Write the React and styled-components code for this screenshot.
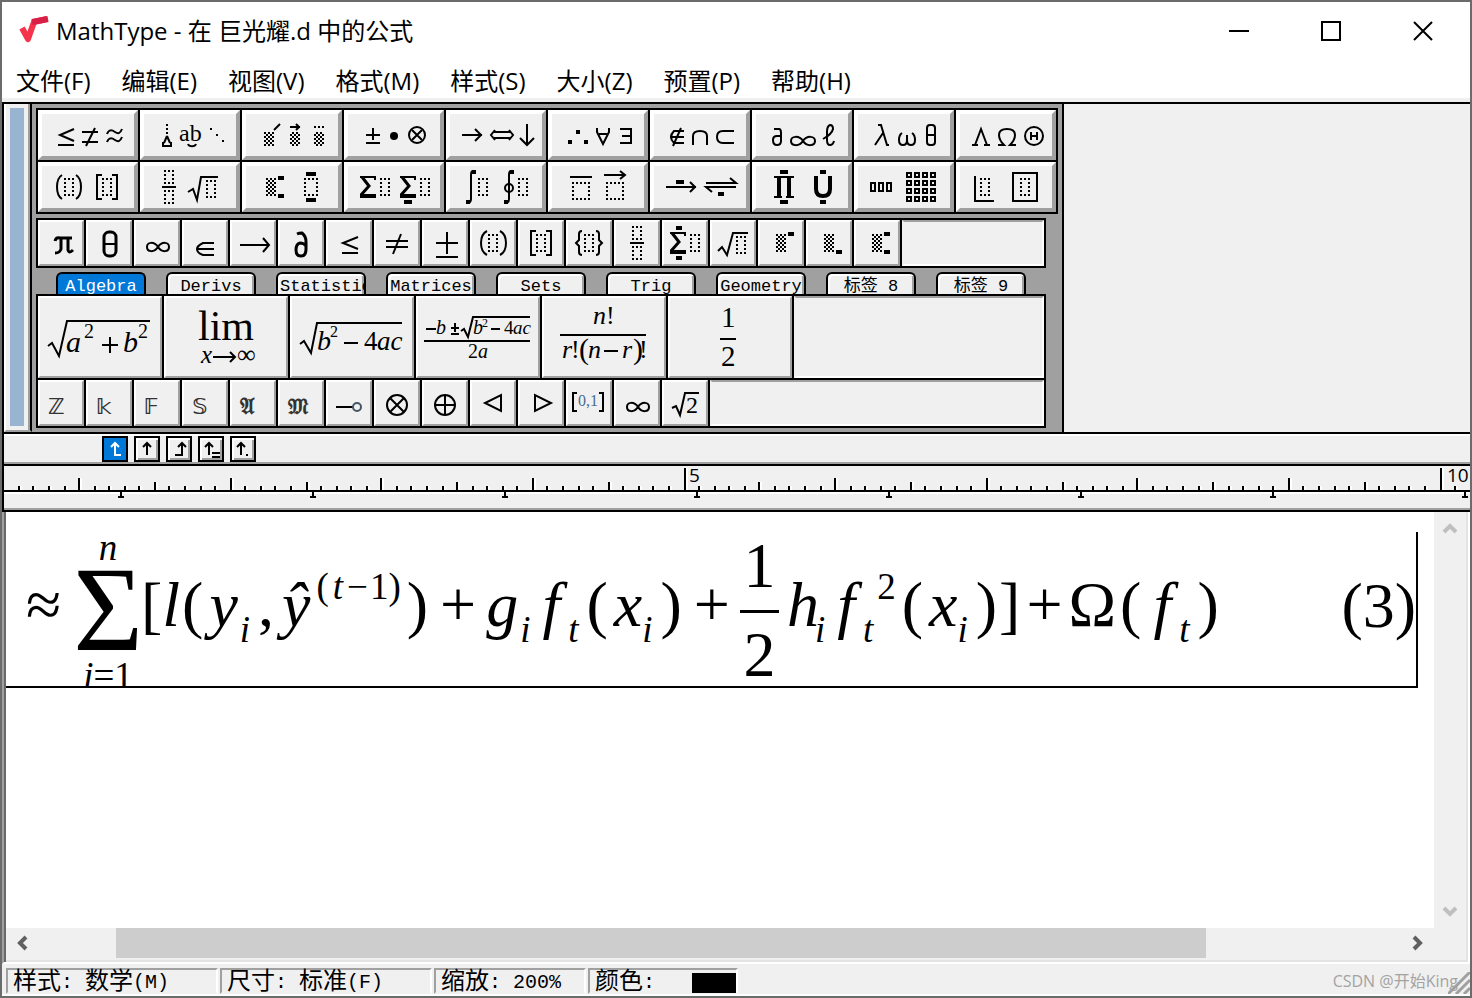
import React from 'react'
import styled, { createGlobalStyle, css } from 'styled-components'

const FACE = '#f0f0f0'
const SHADE = '#a0a0a0'
const BLUE = '#0078d7'

const GlobalStyle = createGlobalStyle`
  * { box-sizing: border-box; }
  body { margin: 0; background: #fff; }
  button { margin: 0; padding: 0; border: 0; border-radius: 0; background: none; color: #000; font: inherit; }
`

const Window = styled.div`
  display: flex;
  flex-direction: column;
  min-height: 100vh;
  border: 2px solid #6b6b6b;
  background: #fff;
  color: #000;
  font-family: 'Open Sans', 'Noto Sans CJK SC', sans-serif;
  font-size: 24px;
  overflow: hidden;
`

const TitleBar = styled.header`
  display: flex;
  align-items: center;
  height: 58px;
  padding: 0 31px 0 16px;
`

const Title = styled.h1`
  flex: 1;
  margin: 0 0 0 6px;
  font-size: 24px;
  font-weight: 400;
  line-height: 32px;
  white-space: nowrap;
`

const WindowButtons = styled.div`
  display: flex;
  gap: 60px;
`

const WindowButton = styled.button`
  display: flex;
  width: 32px;
  height: 32px;
  align-items: center;
  justify-content: center;
`

const MenuBar = styled.nav`
  display: flex;
  gap: 31px;
  height: 42px;
  padding: 5px 14px 0;
  border-bottom: 4px solid ${FACE};
`

const MenuItem = styled.button`
  height: 32px;
  line-height: 32px;
  white-space: nowrap;
`

const Toolbar = styled.section`
  display: flex;
  border-top: 2px solid #000;
  border-left: 2px solid #000;
  background: ${FACE};
`

const Gripper = styled.div`
  width: 28px;
  padding: 4px 4px 4px 4px;
  border-left: 2px solid #fff;
  border-right: 2px solid #000;
  border-bottom: 2px solid ${SHADE};
  box-shadow: inset -2px 0 0 ${SHADE};
  &::before {
    content: '';
    display: block;
    width: 14px;
    height: 100%;
    background: #99b4d1;
  }
`

const Palettes = styled.div`
  padding: 4px;
  border-right: 2px solid #000;
  background: ${SHADE};
`

const BigGrid = styled.div`
  display: grid;
  grid-template-columns: repeat(10, 100px);
  gap: 2px;
  padding: 2px;
  background: #000;
`

const Row = styled.div`
  display: flex;
  gap: 2px;
  width: 1010px;
  padding: 2px;
  margin-top: ${p => (p.$stacked ? '-2px' : p.$spaced ? '4px' : 0)};
  background: #000;
`

const Cell = styled.button`
  flex: none;
  width: ${p => p.$w}px;
  height: ${p => p.$h}px;
  background: ${FACE};
  border: solid;
  border-width: ${p => (p.$deep ? 4 : 2)}px;
  border-color: #fff ${SHADE} ${SHADE} #fff;
  svg { display: block; overflow: visible; }
`

const Blank = styled.div`
  flex: 1;
  background: ${FACE};
  border: 2px solid ${SHADE};
  border-color: ${SHADE} #fff #fff ${FACE};
`

const Tabs = styled.div`
  display: flex;
  gap: 20px;
  padding: 4px 0 0 20px;
`

const Tab = styled.button`
  width: 90px;
  height: 22px;
  padding: 4px 0 0 ${p => (p.$long ? 2 : 0)}px;
  overflow: hidden;
  border: 2px solid #000;
  border-bottom: 0;
  border-radius: 6px 6px 0 0;
  background: ${p => (p.$on ? BLUE : FACE)};
  color: ${p => (p.$on ? '#fff' : '#000')};
  box-shadow: ${p => (p.$on ? 'none' : `inset 2px 2px 0 #fff, inset -2px 0 0 ${SHADE}`)};
  font-family: 'Liberation Mono', 'Noto Sans CJK SC', monospace;
  font-size: 17px;
  line-height: 18px;
  text-align: ${p => (p.$long ? 'left' : 'center')};
  white-space: nowrap;
`

const StopBar = styled.div`
  display: flex;
  gap: 6px;
  height: 34px;
  padding: 0 0 0 98px;
  border-left: 2px solid #000;
  border-top: 2px solid #000;
  border-bottom: 2px solid #000;
  background: ${FACE};
  box-shadow: inset 0 2px 0 #fff, inset 0 -2px 0 ${SHADE};
  align-items: center;
`

const StopButton = styled.button`
  width: 26px;
  height: 26px;
  border: 2px solid #000;
  background: ${p => (p.$on ? BLUE : FACE)};
  color: ${p => (p.$on ? '#fff' : '#000')};
  ${p => !p.$on && css`box-shadow: inset 2px 2px 0 #fff, inset -2px -2px 0 ${SHADE};`}
  svg { display: block; }
`

const RulerBox = styled.div`
  height: 46px;
  overflow: hidden;
  border-left: 2px solid #000;
  border-bottom: 2px solid #000;
  background: ${FACE};
  box-shadow: inset 0 -2px 0 ${SHADE};
  svg { display: block; width: 100%; height: 44px; }
`

const Body = styled.main`
  flex: 1;
  display: grid;
  grid-template-columns: minmax(0, 1fr) 32px;
  grid-template-rows: 1fr 32px;
  border-left: 2px solid ${SHADE};
  border-right: 2px solid #fff;
  border-bottom: 2px solid #fff;
  box-shadow: inset 2px 0 0 #696969, inset -2px -2px 0 #e3e3e3;
  padding: 0 2px 2px 2px;
`

const Canvas = styled.div`
  padding: 20px 16px 0 0;
`

const FormulaBox = styled.div`
  display: flex;
  justify-content: space-between;
  height: 156px;
  padding-left: 20px;
  overflow: hidden;
  border-right: 2px solid #000;
  border-bottom: 2px solid #000;
  font-family: 'Liberation Serif', serif;
  font-size: 64px;
  line-height: 64px;
  white-space: nowrap;
`

const Equation = styled.div`
  padding-top: 2px;
  font-style: italic;
`

const EquationNumber = styled.div`
  padding-top: 42px;
`

const Sym = styled.span`
  display: inline-block;
  margin-left: ${p => p.$gap || 0}px;
  font-style: ${p => (p.$up ? 'normal' : 'italic')};
`

const Script = styled(Sym)`
  font-size: 37px;
  line-height: 36px;
  vertical-align: ${p => (p.$sup ? 27 : -16)}px;
`

const Stack = styled.span`
  display: inline-flex;
  flex-direction: column;
  align-items: center;
  font-style: normal;
  vertical-align: ${p => p.$raise}px;
  margin-left: ${p => p.$gap}px;
`

const Limit = styled.span`
  font-size: 37px;
  line-height: 28px;
  font-style: ${p => (p.$up ? 'normal' : 'italic')};
`

const BigOp = styled.span`
  margin: 8px 0 12px;
  font-size: 120px;
  line-height: 80px;
`

const FracPart = styled.span`
  line-height: 60px;
`

const FracBar = styled.span`
  width: 39px;
  height: 3px;
  margin: 14px 0 12px;
  background: #000;
`

const VScroll = styled.div`
  display: flex;
  flex-direction: column;
  justify-content: space-between;
  padding: 2px 0;
  background: ${FACE};
`

const HScroll = styled.div`
  grid-column: 1 / 3;
  display: flex;
  padding-right: 32px;
  background: ${FACE};
`

const ScrollButton = styled.button`
  flex: none;
  width: 32px;
  height: 30px;
  svg { display: block; margin: 0 auto; }
`

const Thumb = styled.div`
  flex: 1090;
  height: 30px;
  background: #cdcdcd;
`

const Gap = styled.div`
  flex: ${p => p.$size};
`

const StatusBar = styled.footer`
  display: flex;
  gap: 2px;
  height: 32px;
  padding: 4px 0 0 4px;
  border-bottom: 2px solid #fff;
  background: ${FACE};
`

const StatusPane = styled.div`
  display: flex;
  align-items: center;
  width: ${p => p.$w}px;
  padding: 3px 0 0 5px;
  border: 2px solid;
  border-color: ${SHADE} #fff transparent ${SHADE};
  font-family: 'Liberation Mono', 'Noto Sans CJK SC', monospace;
  font-size: 24px;
  line-height: 24px;
  white-space: pre;
`

const Ascii = styled.span`
  font-size: 20px;
`

const Swatch = styled.span`
  width: 44px;
  height: 20px;
  margin-left: auto;
  background: #000;
`

const Watermark = styled.span`
  margin-left: auto;
  align-self: center;
  color: #a3a3a3;
  font-size: 16px;
  line-height: 24px;
`

const Grip = styled.svg`
  flex: none;
  align-self: flex-end;
  margin-left: -12px;
`

/* ---------- drawing helpers for palette pictures ---------- */

const Pic = ({ w, h, inset, children }) => (
  <svg
    width={w - inset * 2}
    height={h - inset * 2}
    viewBox={`${inset} ${inset} ${w - inset * 2} ${h - inset * 2}`}
    fill="none"
    stroke="#000"
    strokeWidth="2"
    aria-hidden="true"
  >
    {children}
  </svg>
)

const L = ({ d, w = 2, crisp }) => (
  <path d={d} strokeWidth={w} shapeRendering={crisp ? 'crispEdges' : 'auto'} />
)

const Slot = ({ x, y, w = 10, h = 18 }) => (
  <rect x={x + 1} y={y + 1} width={w - 2} height={h - 2} strokeDasharray="2 2" strokeDashoffset="1" shapeRendering="crispEdges" />
)

const Hatch = ({ x, y, w = 10, h = 18 }) => (
  <rect x={x} y={y} width={w} height={h} fill="url(#hatch)" stroke="none" shapeRendering="crispEdges" />
)

const Blk = ({ x, y, w = 6, h = 4 }) => (
  <rect x={x} y={y} width={w} height={h} fill="#000" stroke="none" shapeRendering="crispEdges" />
)

const T = ({ x, y, s = 24, i, b, f = 'Liberation Serif', c = '#000', children }) => (
  <text
    x={x}
    y={y}
    fontSize={s}
    fontFamily={`'${f}', serif`}
    fontStyle={i ? 'italic' : 'normal'}
    fontWeight={b ? 700 : 400}
    fill={c}
    stroke="none"
  >
    {children}
  </text>
)

const Sigma = ({ x, y }) => (
  <g>
    <L d={`M${x} ${y + 1}h15v3M${x + 15} ${y + 18}v3`} />
    <L d={`M${x + 2} ${y + 1}l7 9l-8 9`} w={3} />
    <L d={`M${x} ${y + 20}h16`} w={4} crisp />
  </g>
)

const Infinity8 = ({ x, y, w = 24 }) => {
  const c = x + w / 2
  const l = x + 1
  const r = x + w - 1
  return (
    <path d={`M${c} ${y}C${c - 4} ${y - 6} ${l} ${y - 5} ${l} ${y}C${l} ${y + 5} ${c - 4} ${y + 6} ${c} ${y}C${c + 4} ${y - 6} ${r} ${y - 5} ${r} ${y}C${r} ${y + 5} ${c + 4} ${y + 6} ${c} ${y}Z`} />
  )
}

const HatchDefs = () => (
  <svg width="0" height="0" style={{ display: 'block' }} aria-hidden="true">
    <defs>
      <pattern id="hatch" width="4" height="4" patternUnits="userSpaceOnUse">
        <path d="M0 0h2v2h-2zM2 2h2v2h-2z" fill="#000" />
      </pattern>
    </defs>
  </svg>
)

const bigCells = [
  ['Relational symbols', <><L d="M36 19L22 25L36 31M20 35H36" /><L d="M44 22H60M44 32H60M57 18L48 36" /><L d="M69 24c2-5 5-4 8-2s5 2 7-3M69 32c2-5 5-4 8-2s5 2 7-3" /></>],
  ['Spaces and ellipses', <><path d="M27 14V26" strokeDasharray="2 2" /><L d="M27 26L24 33M27 26L30 33M23 32V36H31V32" /><T x={39} y={31} s={24}>ab</T><L d="M48 34c1 3 7 3 8 0" /><Blk x={70} y={18} w={2} h={2} /><Blk x={76} y={24} w={2} h={2} /><Blk x={82} y={30} w={2} h={2} /></>],
  ['Embellishments', <><Hatch x={22} y={22} h={14} /><L d="M32 20L38 14" /><Hatch x={48} y={22} h={14} /><L d="M48 17H58M54 14L57 17L54 20" /><Hatch x={72} y={22} h={14} /><Blk x={72} y={16} w={2} h={2} /><Blk x={76} y={16} w={2} h={2} /><Blk x={80} y={16} w={2} h={2} /></>],
  ['Operator symbols', <><L d="M22 25H36M29 18V30M22 33H36" crisp /><circle cx="50" cy="26" r="4" fill="#000" stroke="none" /><circle cx="73" cy="25" r="8" /><L d="M68 20L78 30M78 20L68 30" /></>],
  ['Arrow symbols', <><L d="M16 25H36M29 19L35 25L29 31" /><L d="M48 22H64M48 28H64M49 20L45 25L49 30M63 20L67 25L63 30" /><L d="M81 14V35M74 28L81 35L88 28" /></>],
  ['Logical symbols', <><Blk x={28} y={20} w={4} /><Blk x={20} y={30} w={4} /><Blk x={36} y={30} w={4} /><L d="M49 18V22L55 34L61 22V18M51 24H59" /><L d="M72 19H83V33H72M74 26H83" crisp /></>],
  ['Set theory symbols', <><L d="M34 21H24Q18 27 24 33H34M21 27H34M31 18L23 36" /><L d="M43 35V26Q43 21 50 21Q57 21 57 26V35" /><L d="M84 21H73Q67 21 67 27Q67 33 73 33H84" /></>],
  ['Miscellaneous symbols', <><L d="M22 19H27Q29 19 29 23V31Q29 35 25 35Q21 35 21 30Q21 26 25 26H29" /><Infinity8 x={38} y={31} w={26} /><L d="M71 29Q80 24 81 19Q81 15 78 15Q75 16 75 22V30Q75 35 78 35Q81 35 82 31" /></>],
  ['Greek characters (lowercase)', <><L d="M24 15H27L33 35H35M29 23L21 35" /><L d="M48 23Q45 25 45 30Q45 35 49 35Q53 35 53 30V25M53 30Q53 35 57 35Q61 35 61 30Q61 25 58 23" /><rect x="73" y="15" width="8" height="20" rx="3" /><L d="M73 25H81" /></>],
  ['Greek characters (uppercase)', <><L d="M16 35H22M28 35H34M19 35L25 19L31 35" /><L d="M42 35H48Q43 30 43 25Q43 19 51 19Q59 19 59 25Q59 30 54 35H60" /><circle cx="78" cy="26" r="9" /><L d="M75 22V30M81 22V30M75 26H81" /></>],
  ['Fence templates', <><L d="M24 13Q19 16 19 25Q19 34 24 37M38 13Q43 16 43 25Q43 34 38 37" /><Slot x={26} y={16} /><L d="M64 13H59V37H64M74 13H79V37H74" crisp /><Slot x={64} y={16} /></>],
  ['Fraction and radical templates', <><Slot x={24} y={8} h={14} /><L d="M22 25H36" crisp /><Slot x={24} y={28} h={14} /><L d="M48 30L53 27L57 38L61 15H78" /><Slot x={66} y={18} /></>],
  ['Subscript and superscript templates', <><Hatch x={24} y={16} /><Blk x={36} y={14} /><Blk x={36} y={32} /><Slot x={62} y={16} w={14} /><Blk x={64} y={10} w={10} /><Blk x={64} y={36} w={10} /></>],
  ['Summation templates', <><Sigma x={16} y={14} /><Slot x={36} y={16} /><Sigma x={56} y={14} /><Blk x={60} y={38} w={8} /><Slot x={76} y={16} /></>],
  ['Integral templates', <><L d="M30 9H27Q25 9 25 13V37Q25 41 21 41" /><Blk x={26} y={8} w={4} /><Blk x={20} y={38} w={4} /><Slot x={32} y={16} /><L d="M68 9H65Q63 9 63 13V37Q63 41 59 41" /><Blk x={64} y={8} w={4} /><Blk x={58} y={38} w={4} /><circle cx="63" cy="26" r="4" /><Slot x={72} y={16} /></>],
  ['Underbar and overbar templates', <><L d="M22 15H44" crisp /><Slot x={24} y={20} w={18} /><L d="M56 13H77M72 9L77 13L72 17" /><Slot x={58} y={20} w={18} /></>],
  ['Labeled arrow templates', <><L d="M16 25H46M40 20L45 25L40 30" /><Blk x={26} y={18} w={8} /><L d="M56 21H86L80 16M86 25H56L62 30" /><Blk x={68} y={30} /></>],
  ['Products and set theory templates', <><L d="M22 15H42M22 35H30M34 35H42" /><L d="M27 15V35M37 15V35" w={4} crisp /><Blk x={28} y={8} w={8} /><Blk x={28} y={38} w={8} /><L d="M64 14V27Q64 34 71 34Q78 34 78 27V14" w={4} /><Blk x={68} y={8} /><Blk x={68} y={38} /></>],
  ['Matrix templates', <>
    {[16, 24, 32].map(x => <rect key={x} x={x + 1} y="21" width="4" height="8" />)}
    {[0, 1, 2, 3].map(r => [0, 1, 2, 3].map(c => <rect key={`${r}${c}`} x={53 + c * 8} y={11 + r * 8} width="4" height="4" />))}
  </>],
  ['Box templates', <><L d="M19 14V39H38" crisp /><Slot x={24} y={16} /><rect x="57" y="11" width="24" height="28" /><Slot x={64} y={16} /></>],
]

const smallCells = [
  ['pi', <><L d="M17 21Q18 17 22 18H34" w={3} /><L d="M23 19V29Q22 33 17 33M30 19V30Q31 34 35 30" w={3} /></>],
  ['theta', <><rect x="18" y="12" width="12" height="24" rx="5" strokeWidth="3" /><L d="M18 24H30" /></>],
  ['infinity', <Infinity8 x={12} y={27} />],
  ['element of', <L d="M32 23H21Q15 26 15 29Q15 33 21 35H32M15 29H32" />],
  ['right arrow', <L d="M10 25H39M33 18L39 25L33 32" />],
  ['partial', <L d="M19 14Q21 13 24 13Q28 16 28 22V29Q28 36 23 36Q18 36 18 30Q18 24 22 23Q26 23 28 26" w={3} />],
  ['less or equal', <L d="M32 17L17 23L32 29M16 33H32" />],
  ['not equal', <L d="M12 21H34M12 27H34M27 14L19 34" />],
  ['plus minus', <L d="M14 23H36M25 12V34M14 37H36" crisp />],
  ['parentheses', <><L d="M17 11Q11 14 11 23Q11 32 17 35M30 11Q36 14 36 23Q36 32 30 35" /><Slot x={18} y={14} /></>],
  ['brackets', <><L d="M18 11H13V35H18M28 11H33V35H28" crisp /><Slot x={18} y={14} /></>],
  ['braces', <><L d="M16 11Q13 11 13 14V20L10 23L13 26V32Q13 35 16 35M30 11Q33 11 33 14V20L36 23L33 26V32Q33 35 30 35" /><Slot x={18} y={14} /></>],
  ['fraction', <><Slot x={18} y={6} h={14} /><L d="M16 23H30" crisp /><Slot x={18} y={26} h={14} /></>],
  ['sum', <><Blk x={14} y={6} /><Sigma x={8} y={12} /><Blk x={14} y={36} /><Slot x={28} y={14} /></>],
  ['root', <><L d="M8 31L12 27L17 35L23 13H38" /><Slot x={26} y={16} /></>],
  ['superscript', <><Hatch x={18} y={14} /><Blk x={30} y={12} /></>],
  ['subscript', <><Hatch x={18} y={14} /><Blk x={30} y={30} /></>],
  ['both scripts', <><Hatch x={18} y={14} /><Blk x={30} y={12} /><Blk x={30} y={30} /></>],
]

const tallCells = [
  ['root of a squared plus b squared', <>
    <L d="M10 50L14 47L21 60L29 25H112" />
    <T x={28} y={56} s={30} i>a</T><T x={46} y={42} s={20}>2</T><L d="M64 49H80M72 41V57" /><T x={85} y={56} s={30} i>b</T><T x={100} y={42} s={20}>2</T>
  </>],
  ['limit', <><T x={34} y={44} s={42}>lim</T><T x={37} y={67} s={25} i>x</T><L d="M49 61H71M66 56L71 61L66 66" /><T x={73} y={67} s={26}>∞</T></>],
  ['root of b squared minus 4ac', <>
    <L d="M10 48L14 45L21 57L27 27H112" />
    <T x={27} y={54} s={28} i>b</T><T x={40} y={41} s={16}>2</T><L d="M54 47H68" /><T x={74} y={54} s={27}>4</T><T x={87} y={54} s={27} i>ac</T>
  </>],
  ['quadratic formula', <>
    <L d="M10 33H20M35 32H43M39 27V36M35 38H43M8 45H114" /><L d="M45 35L48 33L52 41L57 21H114" />
    <T x={20} y={38} s={20} i>b</T><T x={57} y={38} s={20} i>b</T><T x={66} y={31} s={12}>2</T><L d="M75 33H84" /><T x={88} y={38} s={19}>4</T><T x={97} y={38} s={19} i>ac</T>
    <T x={52} y={62} s={20}>2</T><T x={62} y={62} s={20} i>a</T>
  </>],
  ['n choose r', <>
    <T x={51} y={28} s={26} i>n</T><T x={64} y={28} s={26}>!</T><L d="M18 39H104" />
    <T x={20} y={62} s={26} i>r</T><T x={29} y={62} s={26}>!</T><T x={37} y={63} s={30}>(</T><T x={46} y={62} s={26} i>n</T><L d="M62 55H76" /><T x={80} y={62} s={26} i>r</T><T x={91} y={63} s={30}>)</T><T x={97} y={62} s={26}>!</T>
  </>],
  ['one half', <><T x={53} y={31} s={29}>1</T><L d="M52 43H68" /><T x={53} y={70} s={29}>2</T></>],
]

const letterCells = [
  ['Z', <T x={10} y={34} s={22} b f="DejaVu Sans" c="#333">ℤ</T>],
  ['k', <T x={10} y={34} s={22} b f="DejaVu Sans" c="#333">𝕜</T>],
  ['F', <T x={10} y={34} s={22} b f="DejaVu Sans" c="#333">𝔽</T>],
  ['S', <T x={10} y={34} s={22} b f="DejaVu Sans" c="#333">𝕊</T>],
  ['Fraktur A', <T x={10} y={34} s={22} b f="DejaVu Sans" c="#333">𝔄</T>],
  ['Fraktur M', <T x={10} y={34} s={22} b f="DejaVu Sans" c="#333">𝔐</T>],
  ['multimap', <><L d="M10 27H28" /><circle cx="31" cy="27" r="4" stroke="#456" /></>],
  ['circled times', <><circle cx="23" cy="25" r="10" /><L d="M16 18L30 32M30 18L16 32" /></>],
  ['circled plus', <><circle cx="23" cy="25" r="10" /><L d="M13 25H33M23 15V35" /></>],
  ['left triangle', <L d="M31 15V31L15 23Z" />],
  ['right triangle', <L d="M17 15V31L33 23Z" />],
  ['unit interval', <><L d="M11 13H7V31H11M33 13H37V31H33" /><T x={12} y={26} s={16} c="#4a6a90">0,1</T></>],
  ['infinity', <Infinity8 x={12} y={27} />],
  ['root two', <><L d="M10 28L14 26L18 35L23 13H37" /><T x={24} y={33} s={24}>2</T></>],
]

const tabs = ['Algebra', 'Derivs', 'Statistics', 'Matrices', 'Sets', 'Trig', 'Geometry', '标签 8', '标签 9']

const menus = ['文件(F)', '编辑(E)', '视图(V)', '格式(M)', '样式(S)', '大小(Z)', '预置(P)', '帮助(H)']

const stops = [
  ['Left tab', 'M11 5V17H17M7 9L11 5L15 9'],
  ['Center tab', 'M11 5V17M7 9L11 5L15 9'],
  ['Right tab', 'M14 5V17H7M10 9L14 5L18 9'],
  ['Relational tab', 'M9 5V17M5 9L9 5L13 9M12 15H20M12 19H20'],
  ['Decimal tab', 'M9 5V17M5 9L9 5L13 9M14 17H16'],
]

const Cells = ({ items, w, h, deep }) =>
  items.map(([label, art]) => (
    <Cell key={label} $w={w} $h={h} $deep={deep} aria-label={label} title={label}>
      <Pic w={w} h={h} inset={deep ? 4 : 2}>{art}</Pic>
    </Cell>
  ))

// x positions are measured from the left end of the ruler
const Ruler = () => {
  const ticks = []
  for (let k = 6; k < 220; k++) {
    const x = 2 * Math.floor((-72 + k * 15.12) / 2) - 4
    const len = k % 50 === 0 ? 22 : k % 10 === 0 ? 12 : k % 5 === 0 ? 8 : 4
    ticks.push(
      <g key={k}>
        <rect x={x + 2} y={24 - len} width="2" height={len} fill="#fff" />
        <rect x={x} y={24 - len} width="2" height={len} />
      </g>
    )
  }
  const marks = []
  for (let n = 0; n < 16; n++) {
    marks.push(<path key={n} d={`M${116 + n * 192} 26h2v4h2v2h-6v-2h2z`} />)
  }
  return (
    <RulerBox>
      <svg shapeRendering="crispEdges" aria-label="Ruler">
        {ticks}
        <rect x="0" y="24" width="100%" height="2" />
        <rect x="0" y="26" width="100%" height="2" fill="#fff" />
        {marks}
        <text x="685" y="16" fontSize="19" fontFamily="'Open Sans', sans-serif">5</text>
        <text x="1443" y="16" fontSize="19" fontFamily="'Open Sans', sans-serif">10</text>
      </svg>
    </RulerBox>
  )
}

const Formula = () => (
  <FormulaBox>
    <Equation>
      <Sym $up>≈</Sym>
      <Stack $raise={66} $gap={12}>
        <Limit>n</Limit>
        <BigOp>Σ</BigOp>
        <Limit $up><i>i</i>=1</Limit>
      </Stack>
      <Sym $up $gap={-2}>[</Sym>
      <Sym>l</Sym>
      <Sym $up $gap={2}>(</Sym>
      <Sym $gap={6}>y</Sym>
      <Script $gap={2}>i</Script>
      <Sym $up $gap={8}>,</Sym>
      <Sym $gap={8}>ŷ</Sym>
      <Script $sup $up $gap={6}>(</Script>
      <Script $sup $gap={4}>t</Script>
      <Script $sup $up $gap={4}>−</Script>
      <Script $sup $up $gap={2}>1</Script>
      <Script $sup $up>)</Script>
      <Sym $up $gap={6}>)</Sym>
      <Sym $up $gap={12}>+</Sym>
      <Sym $gap={10}>g</Sym>
      <Script $gap={2}>i</Script>
      <Sym $gap={12}>f</Sym>
      <Script $gap={8}>t</Script>
      <Sym $up $gap={8}>(</Sym>
      <Sym $gap={6}>x</Sym>
      <Script>i</Script>
      <Sym $up $gap={8}>)</Sym>
      <Sym $up $gap={12}>+</Sym>
      <Stack $raise={39} $gap={10}>
        <FracPart>1</FracPart>
        <FracBar />
        <FracPart>2</FracPart>
      </Stack>
      <Sym $gap={8}>h</Sym>
      <Script $gap={-4}>i</Script>
      <Sym $gap={12}>f</Sym>
      <Script $gap={8}>t</Script>
      <Script $sup $up $gap={4}>2</Script>
      <Sym $up $gap={6}>(</Sym>
      <Sym $gap={6}>x</Sym>
      <Script>i</Script>
      <Sym $up $gap={8}>)</Sym>
      <Sym $up $gap={2}>]</Sym>
      <Sym $up $gap={6}>+</Sym>
      <Sym $up $gap={6}>Ω</Sym>
      <Sym $up $gap={4}>(</Sym>
      <Sym $gap={12}>f</Sym>
      <Script $gap={8}>t</Script>
      <Sym $up $gap={8}>)</Sym>
    </Equation>
    <EquationNumber>(3)</EquationNumber>
  </FormulaBox>
)

const Chevron = ({ d, color }) => (
  <svg width="20" height="20" viewBox="0 0 20 20" fill="none" stroke={color} strokeWidth="4" aria-hidden="true">
    <path d={d} />
  </svg>
)

export default function App() {
  return (
    <Window>
      <GlobalStyle />
      <HatchDefs />

      <TitleBar>
        <svg width="32" height="32" viewBox="0 0 32 32" fill="none" aria-hidden="true">
          <path d="M4 13L10 24L16 7L29 4" stroke="#f5334a" strokeWidth="6" strokeLinejoin="round" />
          <path d="M14 7L30 4" stroke="#d81f45" strokeWidth="6" />
        </svg>
        <Title>MathType - 在 巨光耀.d 中的公式</Title>
        <WindowButtons>
          <WindowButton aria-label="Minimize">
            <svg width="20" height="20" stroke="#000" strokeWidth="2"><path d="M0 10H20" /></svg>
          </WindowButton>
          <WindowButton aria-label="Maximize">
            <svg width="20" height="20" stroke="#000" strokeWidth="2" fill="none"><path d="M1 1H19V19H1Z" /></svg>
          </WindowButton>
          <WindowButton aria-label="Close">
            <svg width="20" height="20" stroke="#000" strokeWidth="2"><path d="M1 1L19 19M19 1L1 19" /></svg>
          </WindowButton>
        </WindowButtons>
      </TitleBar>

      <MenuBar>
        {menus.map(m => <MenuItem key={m}>{m}</MenuItem>)}
      </MenuBar>

      <Toolbar>
        <Gripper />
        <Palettes>
          <BigGrid>
            <Cells items={bigCells} w={100} h={50} deep />
          </BigGrid>
          <Row $spaced>
            <Cells items={smallCells} w={46} h={46} />
            <Blank />
          </Row>
          <Tabs role="tablist">
            {tabs.map((t, i) => (
              <Tab key={t} role="tab" aria-selected={i === 0} $on={i === 0} $long={t.length > 8}>{t}</Tab>
            ))}
          </Tabs>
          <Row>
            <Cells items={tallCells} w={124} h={82} />
            <Blank />
          </Row>
          <Row $stacked>
            <Cells items={letterCells} w={46} h={46} />
            <Blank />
          </Row>
        </Palettes>
      </Toolbar>

      <StopBar>
        {stops.map(([label, d], i) => (
          <StopButton key={label} aria-label={label} $on={i === 0}>
            <svg width="22" height="22" viewBox="0 0 22 22" fill="none" stroke="currentColor" strokeWidth="2"><path d={d} /></svg>
          </StopButton>
        ))}
      </StopBar>

      <Ruler />

      <Body>
        <Canvas>
          <Formula />
        </Canvas>
        <VScroll>
          <ScrollButton aria-label="Scroll up"><Chevron d="M4 13L10 7L16 13" color="#bfbfbf" /></ScrollButton>
          <ScrollButton aria-label="Scroll down"><Chevron d="M4 7L10 13L16 7" color="#bfbfbf" /></ScrollButton>
        </VScroll>
        <HScroll>
          <ScrollButton aria-label="Scroll left"><Chevron d="M14 4L8 10L14 16" color="#606060" /></ScrollButton>
          <Gap $size={78} />
          <Thumb />
          <Gap $size={196} />
          <ScrollButton aria-label="Scroll right"><Chevron d="M6 4L12 10L6 16" color="#606060" /></ScrollButton>
        </HScroll>
      </Body>

      <StatusBar>
        <StatusPane $w={212}>样式<Ascii>: </Ascii>数学<Ascii>(M)</Ascii></StatusPane>
        <StatusPane $w={212}>尺寸<Ascii>: </Ascii>标准<Ascii>(F)</Ascii></StatusPane>
        <StatusPane $w={152}>缩放<Ascii>: 200%</Ascii></StatusPane>
        <StatusPane $w={150}>颜色<Ascii>:</Ascii><Swatch /></StatusPane>
        <Watermark>CSDN @开始King</Watermark>
        <Grip width="22" height="22" stroke={SHADE} strokeWidth="3" aria-hidden="true">
          <path d="M0 22L22 0M8 22L22 8M16 22L22 16" />
        </Grip>
      </StatusBar>
    </Window>
  )
}
